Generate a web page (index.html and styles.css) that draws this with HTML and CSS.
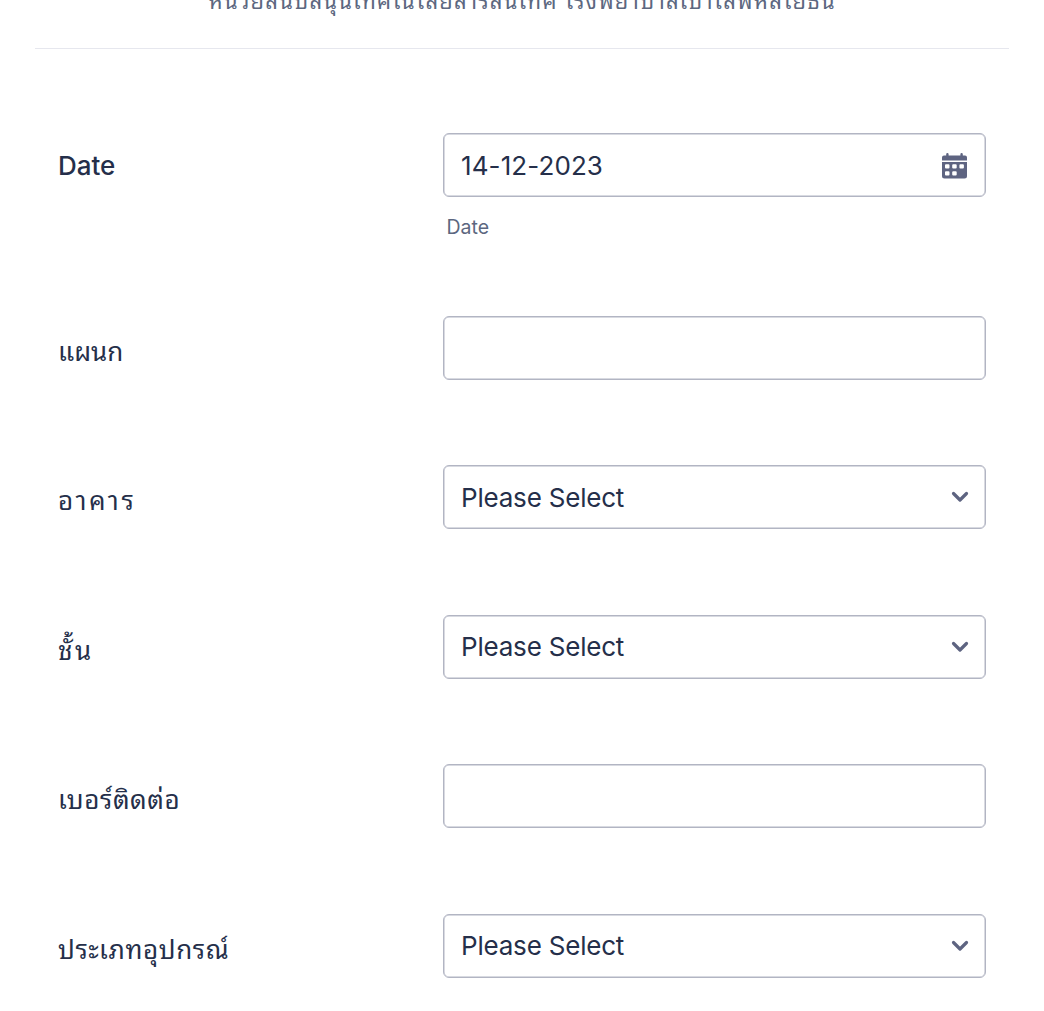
FILE: index.html
```html
<!DOCTYPE html>
<html lang="th">
<head>
  <meta charset="UTF-8" />
  <meta name="viewport" content="width=device-width, initial-scale=1.0"/>
  <title>Request Form</title>
  <link rel="stylesheet" href="styles.css">
</head>
<body>
<div class="form">
  <div class="form-header">
    <div class="sub-header">หน่วยสนับสนุนเทคโนโลยีสารสนเทศ โรงพยาบาลเปาโลพหลโยธิน</div>
  </div>

  <div class="row row-date">
    <label class="label label-en">Date</label>
    <div class="input">
      <div class="field">
        <span class="date-value">14-12-2023</span>
        <svg class="calendar" viewBox="0 0 25 26">
          <path d="M2 2.5h2.2V1.2a1 1 0 0 1 2.4 0v1.3h11.8V1.2a1 1 0 0 1 2.4 0v1.3H23a2 2 0 0 1 2 2V7.5H0v-3a2 2 0 0 1 2-2z"/>
          <path fill-rule="evenodd" d="M0 9h25v14a2.5 2.5 0 0 1-2.5 2.5h-20A2.5 2.5 0 0 1 0 23zM4 11.3h2.5a1 1 0 0 1 1 1v2.2a1 1 0 0 1-1 1H4a1 1 0 0 1-1-1v-2.2a1 1 0 0 1 1-1zM11.2 11.3h2.5a1 1 0 0 1 1 1v2.2a1 1 0 0 1-1 1h-2.5a1 1 0 0 1-1-1v-2.2a1 1 0 0 1 1-1zM18.4 11.3h2.5a1 1 0 0 1 1 1v2.2a1 1 0 0 1-1 1h-2.5a1 1 0 0 1-1-1v-2.2a1 1 0 0 1 1-1zM4 18.3h2.5a1 1 0 0 1 1 1v2.2a1 1 0 0 1-1 1H4a1 1 0 0 1-1-1v-2.2a1 1 0 0 1 1-1zM11.2 18.3h2.5a1 1 0 0 1 1 1v2.2a1 1 0 0 1-1 1h-2.5a1 1 0 0 1-1-1v-2.2a1 1 0 0 1 1-1z"/>
        </svg>
      </div>
      <div class="sub-label">Date</div>
    </div>
  </div>

  <div class="row">
    <label class="label">แผนก</label>
    <div class="field"></div>
  </div>

  <div class="row">
    <label class="label label-wide">อาคาร</label>
    <div class="field">
      <span>Please Select</span>
      <svg class="chevron" viewBox="0 0 18 12"><path d="M2.5 2.5l6.5 6.5 6.5-6.5"/></svg>
    </div>
  </div>

  <div class="row">
    <label class="label label-wide">ชั้น</label>
    <div class="field">
      <span>Please Select</span>
      <svg class="chevron" viewBox="0 0 18 12"><path d="M2.5 2.5l6.5 6.5 6.5-6.5"/></svg>
    </div>
  </div>

  <div class="row">
    <label class="label label-long">เบอร์ติดต่อ</label>
    <div class="field"></div>
  </div>

  <div class="row">
    <label class="label label-long">ประเภทอุปกรณ์</label>
    <div class="field">
      <span>Please Select</span>
      <svg class="chevron" viewBox="0 0 18 12"><path d="M2.5 2.5l6.5 6.5 6.5-6.5"/></svg>
    </div>
  </div>
</div>
</body>
</html>
```

FILE: styles.css
```css
:root {
  --text-color: #252f4a;
  --muted-color: #5c6780;
  --border-color: #b2b5c3;
}

* {
  box-sizing: border-box;
}

body {
  margin: 0;
  height: 1011px;
  overflow: hidden;
  background-color: #fff;
  color: var(--text-color);
  font-family: Inter, "Noto Sans Thai Looped", "Noto Looped Thai", Loma, Waree, sans-serif;
}

.form {
  padding: 0 35px;
}

.form-header {
  display: flex;
  justify-content: center;
  height: 49px;
  border-bottom: 1px solid #e6e7ee;
}

.sub-header {
  margin-top: -15px;
  height: 32px;
  line-height: 32px;
  font-size: 22px;
  letter-spacing: 1.2px;
  color: var(--muted-color);
  white-space: nowrap;
}

.row {
  display: flex;
  justify-content: space-between;
  height: 64px;
  margin: 0 23px 85.4px;
}

.row:last-child {
  margin-bottom: 0;
}

.row-date {
  height: 98px;
  margin-top: 84px;
  margin-bottom: 85px;
}

.label {
  padding-top: 4px;
  font-size: 26px;
  line-height: 64px;
}

.label-en {
  padding-top: 1px;
  font-weight: 500;
}

.label-wide {
  letter-spacing: 2.6px;
}

.label-long {
  letter-spacing: 0.6px;
}

.field {
  display: flex;
  align-items: center;
  justify-content: space-between;
  width: 543px;
  height: 64px;
  padding: 0 16px 0 17px;
  border: 1px solid var(--border-color);
  border-radius: 6px;
  box-shadow: inset 0 0 0 0.5px var(--border-color);
  font-size: 26px;
  letter-spacing: -0.2px;
}

.date-value {
  letter-spacing: 0.1px;
}

.calendar {
  width: 25px;
  height: 26px;
  margin-top: 1px;
  margin-right: 2px;
  fill: #5e6481;
}

.chevron {
  width: 18px;
  height: 12px;
  fill: none;
  stroke: #5e6481;
  stroke-width: 3.2;
  stroke-linecap: round;
  stroke-linejoin: round;
}

.sub-label {
  padding: 18px 0 0 3.5px;
  font-size: 19.5px;
  line-height: 24px;
  color: var(--muted-color);
}
```
